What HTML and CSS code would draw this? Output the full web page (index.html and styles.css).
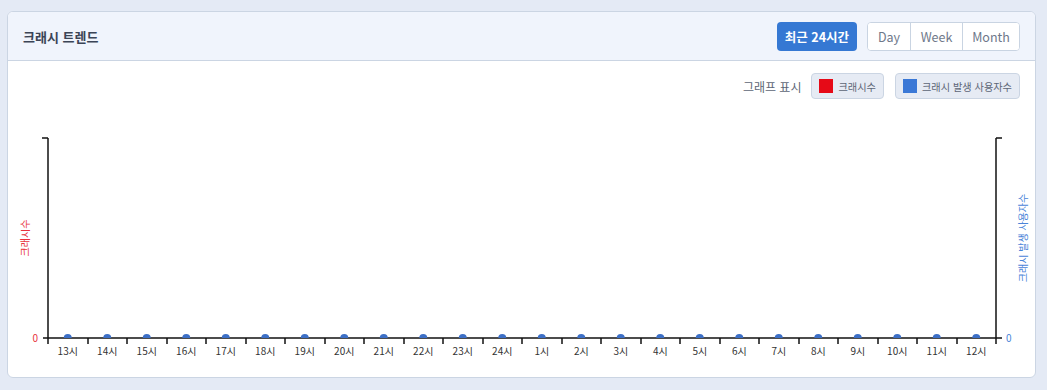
FILE: index.html
```html
<!DOCTYPE html>
<html lang="ko">
<head>
    <meta charset="UTF-8">
    <meta name="viewport" content="width=device-width, initial-scale=1.0">
    <title>크래시 트렌드</title>
    <link rel="stylesheet" href="styles.css">
</head>
<body>

    <div class="card">
        <div class="card-header">
            <h2>크래시 트렌드</h2>
            <div class="range">
                <button class="btn-primary">최근 24시간</button>
                <div class="btn-group">
                    <button>Day</button>
                    <button>Week</button>
                    <button>Month</button>
                </div>
            </div>
        </div>

        <div class="card-body">
            <div class="legend">
                <span class="legend-label">그래프 표시</span>
                <button class="legend-item"><span class="swatch red"></span>크래시수</button>
                <button class="legend-item"><span class="swatch blue"></span>크래시 발생 사용자수</button>
            </div>
            <svg id="chart" class="chart" width="1027" height="278"></svg>
        </div>
    </div>

    <script>
        // chart area inside the svg
        const LEFT = 40, RIGHT = 988, TOP = 39, BOTTOM = 239;
        const hours = ["13시","14시","15시","16시","17시","18시","19시","20시","21시","22시","23시","24시",
                       "1시","2시","3시","4시","5시","6시","7시","8시","9시","10시","11시","12시"];

        function drawChart() {
            const svg = document.getElementById("chart");
            const step = (RIGHT - LEFT) / hours.length;
            let out = "";

            // axes
            out += `<line x1="${LEFT - 6}" y1="${TOP}" x2="${LEFT}" y2="${TOP}" class="axis"/>`;
            out += `<line x1="${LEFT}" y1="${TOP}" x2="${LEFT}" y2="${BOTTOM + 6}" class="axis"/>`;
            out += `<line x1="${RIGHT}" y1="${TOP}" x2="${RIGHT + 6}" y2="${TOP}" class="axis"/>`;
            out += `<line x1="${RIGHT}" y1="${TOP}" x2="${RIGHT}" y2="${BOTTOM + 6}" class="axis"/>`;
            out += `<line x1="${LEFT - 5}" y1="${BOTTOM}" x2="${RIGHT + 6}" y2="${BOTTOM}" class="axis"/>`;

            // zero labels
            out += `<text x="${LEFT - 10}" y="${BOTTOM + 4}" class="zero-left">0</text>`;
            out += `<text x="${RIGHT + 10}" y="${BOTTOM + 4}" class="zero-right">0</text>`;

            // axis titles
            out += `<text transform="translate(21 139) rotate(-90)" class="title-left">크래시수</text>`;
            out += `<text transform="translate(1019 139) rotate(-90)" class="title-right">크래시 발생 사용자수</text>`;

            // dots, ticks, hour labels
            out += `<g clip-path="url(#plot)">`;
            hours.forEach((h, i) => {
                const cx = LEFT + step * i + step / 2;
                out += `<circle cx="${cx}" cy="${BOTTOM}" r="4" class="dot"/>`;
            });
            out += `</g>`;
            hours.forEach((h, i) => {
                const cx = LEFT + step * i + step / 2;
                const tx = Math.round(LEFT + step * (i + 1));
                if (i < hours.length - 1) {
                    out += `<line x1="${tx}" y1="${BOTTOM}" x2="${tx}" y2="${BOTTOM + 6}" class="axis"/>`;
                }
                out += `<text x="${cx}" y="${BOTTOM + 17}" class="hour">${h}</text>`;
            });

            svg.innerHTML = `<defs><clipPath id="plot"><rect x="${LEFT}" y="0" width="${RIGHT - LEFT}" height="${BOTTOM}"/></clipPath></defs>` + out;
        }

        drawChart();
    </script>

</body>
</html>
```

FILE: styles.css
```css
body {
    font-family: "Noto Sans CJK KR", "Noto Sans", sans-serif;
    margin: 0;
    padding: 11px 11px 0 7px;
    background-color: #e4eaf5;
}

.card {
    height: 367px;
    box-sizing: border-box;
    background: white;
    border: 1px solid #cbd5e3;
    border-radius: 6px;
    overflow: hidden;
}

.card-header {
    height: 49px;
    box-sizing: border-box;
    display: flex;
    align-items: center;
    justify-content: space-between;
    padding: 0 15px 0 15px;
    background: #f0f4fc;
    border-bottom: 1px solid #cbd5e3;
}

.card-header h2 {
    margin: 0;
    font-size: 13px;
    font-weight: bold;
    color: #3b4456;
}

.range {
    display: flex;
    align-items: center;
    gap: 10px;
}

button {
    font-family: inherit;
    cursor: pointer;
}

.btn-primary {
    height: 29px;
    width: 80px;
    padding: 0;
    border: none;
    border-radius: 4px;
    background: #3578d3;
    color: white;
    font-size: 12.5px;
    font-weight: bold;
}

.btn-group {
    display: flex;
    height: 29px;
    box-sizing: border-box;
    border: 1px solid #c9d4e2;
    border-radius: 4px;
    background: white;
    overflow: hidden;
}

.btn-group button {
    border: none;
    border-left: 1px solid #c9d4e2;
    background: white;
    color: #6e788a;
    font-size: 12.5px;
    padding: 0;
}

.btn-group button:first-child {
    border-left: none;
    width: 42px;
}

.btn-group button:nth-child(2) {
    width: 52px;
}

.btn-group button:last-child {
    width: 57px;
}

.card-body {
    padding-top: 12px;
}

.legend {
    display: flex;
    justify-content: flex-end;
    align-items: center;
    gap: 11px;
    padding-right: 15px;
    height: 26px;
}

.legend-label {
    font-size: 12px;
    color: #5d6676;
    margin-right: -1px;
}

.legend-item {
    height: 26px;
    box-sizing: border-box;
    display: flex;
    align-items: center;
    gap: 5px;
    padding: 0 7px;
    border: 1px solid #cbd5e3;
    border-radius: 4px;
    background: #e6ebf4;
    color: #5d6676;
    font-size: 10.2px;
}

.swatch {
    width: 14px;
    height: 14px;
    display: inline-block;
}

.swatch.red {
    background: #e60a17;
}

.swatch.blue {
    background: #3a78d6;
}

.chart {
    display: block;
}

.axis {
    stroke: #111;
    stroke-width: 1.5;
}

.dot {
    fill: #3c6fc6;
}

.hour {
    font-size: 10px;
    fill: #333;
    text-anchor: middle;
}

.zero-left {
    font-size: 10px;
    fill: #e8323c;
    text-anchor: end;
}

.zero-right {
    font-size: 10px;
    fill: #4a84d8;
}

.title-left {
    font-size: 10px;
    fill: #e8323c;
    text-anchor: middle;
}

.title-right {
    font-size: 10px;
    fill: #4a84d8;
    text-anchor: middle;
}
```
